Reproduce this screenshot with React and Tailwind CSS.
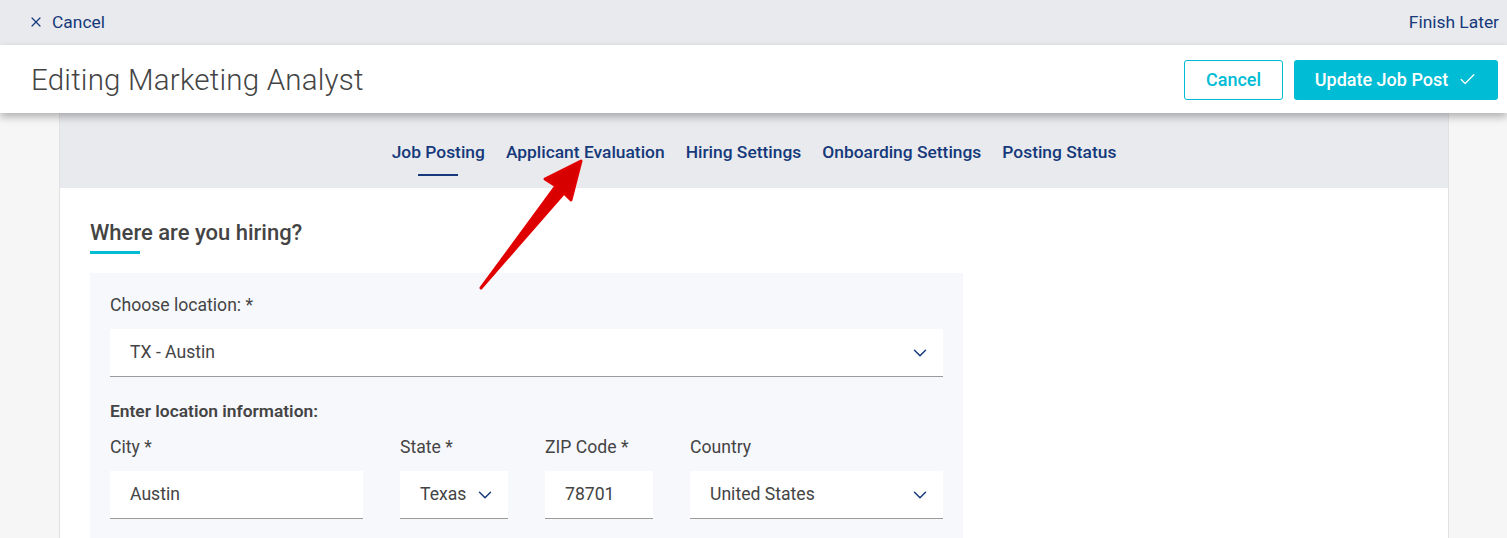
import { X, Check, ChevronDown } from "lucide-react";

const navy = "text-[#15397a]";

function Field({ label, value, width, select }) {
  return (
    <div className={`flex flex-col ${width}`}>
      <label className="text-[17.6px] leading-[20px] text-[#444] mb-[14px]">{label}</label>
      <div className="h-[48px] bg-white border-b border-[#9a9a9a] flex items-center justify-between pl-[20px] pr-[12px]">
        <span className="text-[17.6px] text-[#444]">{value}</span>
        {select && <ChevronDown size={22} strokeWidth={1.6} className="text-[#15397a]" />}
      </div>
    </div>
  );
}

function Arrow() {
  return (
    <svg
      className="absolute left-0 top-0 pointer-events-none z-20"
      width="1507"
      height="538"
      viewBox="0 0 1507 538"
    >
      <defs>
        <linearGradient id="ar" x1="0" y1="1" x2="1" y2="0">
          <stop offset="0" stopColor="#e60000" />
          <stop offset="1" stopColor="#d40000" />
        </linearGradient>
      </defs>
      <polygon
        points="581,161 571,200 564,193 481,288 556,186 545,179"
        fill="url(#ar)"
        stroke="#e00000"
        strokeWidth="3"
        strokeLinejoin="round"
      />
    </svg>
  );
}

export default function App() {
  return (
    <div className="relative min-h-[538px] bg-[#f6f6f6] font-['Roboto',sans-serif] overflow-hidden">
      {/* top bar */}
      <div className="h-[45px] bg-[#e9eaee] flex items-center justify-between pl-[28px] pr-[8px]">
        <button className={`flex items-center gap-[8px] text-[17.4px] ${navy}`}>
          <X size={16} strokeWidth={1.8} />
          Cancel
        </button>
        <button className={`text-[17.4px] ${navy}`}>Finish Later</button>
      </div>

      {/* header */}
      <div className="relative z-10 h-[68px] bg-white flex items-center justify-between pl-[31px] pr-[9px] pt-[1px] shadow-[0_4px_8px_rgba(0,0,0,0.28)]">
        <h1 className="text-[29.5px] font-light text-[#444] tracking-[0.2px] pt-[2px]">Editing Marketing Analyst</h1>
        <div className="flex gap-[11px]">
          <button className="w-[99px] h-[40px] rounded-[3px] border border-[#00bcd4] text-[#00bcd4] text-[18px] font-medium">
            Cancel
          </button>
          <button className="w-[204px] h-[40px] rounded-[3px] bg-[#00bcd4] text-white text-[18px] font-medium flex items-center justify-center gap-[10px]">
            Update Job Post
            <Check size={19} strokeWidth={1.6} />
          </button>
        </div>
      </div>

      {/* card */}
      <div className="ml-[59px] w-[1390px] bg-white border-x border-[#e2e2e2] min-h-[425px]">
        <div className="h-[75px] bg-[#e9eaee] flex justify-center gap-[21px] pt-[27px]">
          {["Job Posting", "Applicant Evaluation", "Hiring Settings", "Onboarding Settings", "Posting Status"].map(
            (t, i) => (
              <div key={t} className="flex flex-col items-center">
                <span className={`text-[17.4px] font-medium leading-[24px] ${navy}`}>{t}</span>
                {i === 0 && <div className="mt-[10px] w-[40px] h-[1.5px] bg-[#15397a]" />}
              </div>
            )
          )}
        </div>

        <div className="pl-[30px] pt-[31px]">
          <h2 className="text-[22px] font-medium text-[#444] leading-[28px]">Where are you hiring?</h2>
          <div className="mt-[4px] w-[50px] h-[3px] bg-[#00bcd4]" />

          <div className="mt-[19px] w-[873px] bg-[#f7f8fc] px-[20px] pt-[21px] pb-[20px]">
            <label className="block text-[17.6px] leading-[22px] text-[#444] mb-[13px]">Choose location: *</label>
            <div className="h-[48px] bg-white border-b border-[#9a9a9a] flex items-center justify-between pl-[20px] pr-[12px]">
              <span className="text-[17.6px] text-[#444]">TX - Austin</span>
              <ChevronDown size={22} strokeWidth={1.6} className="text-[#15397a]" />
            </div>

            <div className="mt-[23px] text-[17.4px] font-semibold text-[#444] leading-[22px]">Enter location information:</div>

            <div className="mt-[15px] flex gap-[37px]">
              <Field label="City *" value="Austin" width="w-[253px]" />
              <Field label="State *" value="Texas" width="w-[108px]" select />
              <Field label="ZIP Code *" value="78701" width="w-[108px]" />
              <Field label="Country" value="United States" width="w-[253px]" select />
            </div>
          </div>
        </div>
      </div>

      <Arrow />
    </div>
  );
}
